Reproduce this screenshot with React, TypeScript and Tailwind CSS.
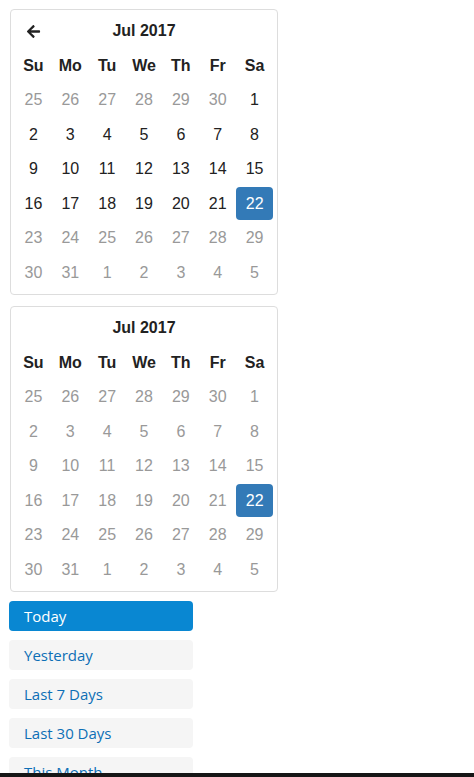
import { FaArrowLeft } from 'react-icons/fa';

const WEEKDAYS = ['Su', 'Mo', 'Tu', 'We', 'Th', 'Fr', 'Sa'];

interface DayCell {
  label: number;
  muted: boolean;   // outside month / out of range
  active?: boolean; // selected day
}

// July 2017 grid, weeks starting on Sunday; days after the 22nd are past the max date
function buildWeeks(allMuted: boolean): DayCell[][] {
  const days: DayCell[] = [];
  [25, 26, 27, 28, 29, 30].forEach((d) => days.push({ label: d, muted: true }));
  for (let d = 1; d <= 31; d++) {
    const muted = d === 22 ? false : allMuted || d > 22;
    days.push({ label: d, muted, active: d === 22 });
  }
  [1, 2, 3, 4, 5].forEach((d) => days.push({ label: d, muted: true }));
  const weeks: DayCell[][] = [];
  for (let i = 0; i < days.length; i += 7) weeks.push(days.slice(i, i + 7));
  return weeks;
}

function Calendar({ showPrev, allMuted }: { showPrev?: boolean; allMuted?: boolean }) {
  const weeks = buildWeeks(!!allMuted);
  return (
    <div className="w-[268px] rounded-[4px] border border-[#dddddd] bg-white p-[4px] font-['Liberation_Sans',Arial,sans-serif] text-[16px]">
      {/* Month header */}
      <div className="grid h-[34.5px] grid-cols-7 items-center">
        <div className="flex justify-center pl-[1px] text-[#222]">
          {showPrev && <FaArrowLeft size={15} />}
        </div>
        <div className="col-span-5 text-center font-bold text-[#222]">Jul 2017</div>
        <div />
      </div>

      {/* Weekday names */}
      <div className="grid h-[34.5px] grid-cols-7 items-center">
        {WEEKDAYS.map((w) => (
          <div key={w} className="text-center font-bold text-[#222]">
            {w}
          </div>
        ))}
      </div>

      {weeks.map((week, wi) => (
        <div key={wi} className="grid h-[34.5px] grid-cols-7 items-center">
          {week.map((day, di) => (
            <div
              key={di}
              className={
                day.active
                  ? 'mx-auto flex h-[33px] w-[37px] items-center justify-center rounded-[4px] bg-[#337ab7] text-white'
                  : day.muted
                    ? 'text-center text-[#999999]'
                    : 'text-center text-[#222222]'
              }
            >
              {day.label}
            </div>
          ))}
        </div>
      ))}
    </div>
  );
}

const RANGES = ['Today', 'Yesterday', 'Last 7 Days', 'Last 30 Days', 'This Month'];

export default function App() {
  return (
    <div className="relative h-[777px] overflow-hidden bg-white">
      <div className="flex flex-col gap-[11px] pl-[10px] pt-[9px]">
        <Calendar showPrev />
        <Calendar allMuted />
      </div>

      {/* Preset ranges */}
      <div className="mt-[9px] flex flex-col gap-[9px] pl-[9px]">
        {RANGES.map((r, i) => (
          <div
            key={r}
            className={
              i === 0
                ? "flex h-[30px] w-[184px] items-center rounded-[4px] bg-[#0987d2] pl-[15px] font-['Open_Sans',sans-serif] text-[15px] text-white"
                : "flex h-[30px] w-[184px] items-center rounded-[4px] bg-[#f5f5f5] pl-[15px] font-['Open_Sans',sans-serif] text-[15px] text-[#0d6fb6]"
            }
          >
            {r}
          </div>
        ))}
      </div>

      {/* window edge strip */}
      <div className="absolute bottom-0 left-0 h-[4px] w-full bg-[#161616]" />
    </div>
  );
}
